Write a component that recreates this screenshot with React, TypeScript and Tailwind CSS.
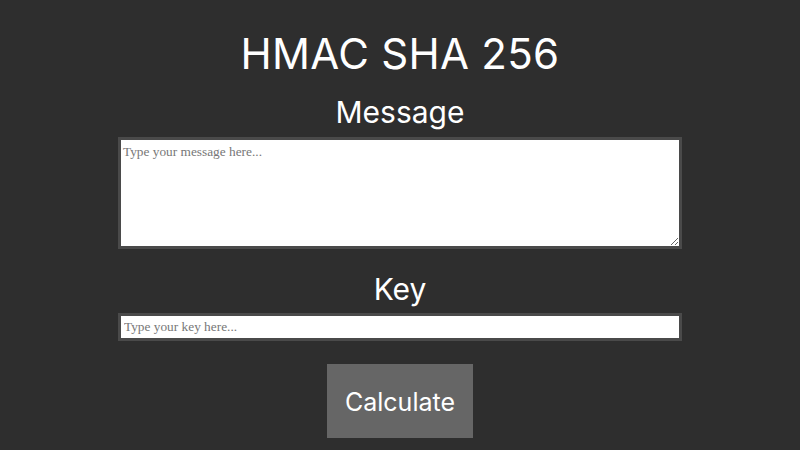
import { useState } from "react";

export default function App() {
    const [message, setMessage] = useState("");
    const [key, setKey] = useState("");

    return (
        <div className="min-h-screen w-full bg-[#2e2e2e] text-white font-['Inter','Open_Sans',sans-serif]">
            <div className="flex flex-col items-center pt-[28px]">
                <h1 className="text-[42px] leading-[52px] font-normal tracking-[0.3px]">HMAC SHA 256</h1>

                {/* message field */}
                <h2 className="mt-[12px] text-[30px] leading-[40px] font-normal">Message</h2>
                <textarea
                    value={message}
                    onChange={(e) => setMessage(e.target.value)}
                    placeholder="Type your message here..."
                    className="mt-[5px] w-[564px] h-[112px] bg-white text-black border-[3px] border-[#4a4a4a] px-[2px] py-[2px] text-[13.33px] font-['Liberation_Serif',serif] placeholder:text-[#777] outline-none"
                />

                {/* key field */}
                <h2 className="mt-[20px] text-[30px] leading-[40px] font-normal">Key</h2>
                <input
                    value={key}
                    onChange={(e) => setKey(e.target.value)}
                    placeholder="Type your key here..."
                    className="mt-[4px] w-[564px] h-[28px] bg-white text-black border-[3px] border-[#4a4a4a] px-[3px] text-[13.33px] font-['Liberation_Serif',serif] placeholder:text-[#777] outline-none"
                />

                <button className="mt-[23px] w-[146px] h-[74px] pt-[3px] bg-[#666666] text-white text-[25px] font-normal">
                    Calculate
                </button>
            </div>
        </div>
    );
}
